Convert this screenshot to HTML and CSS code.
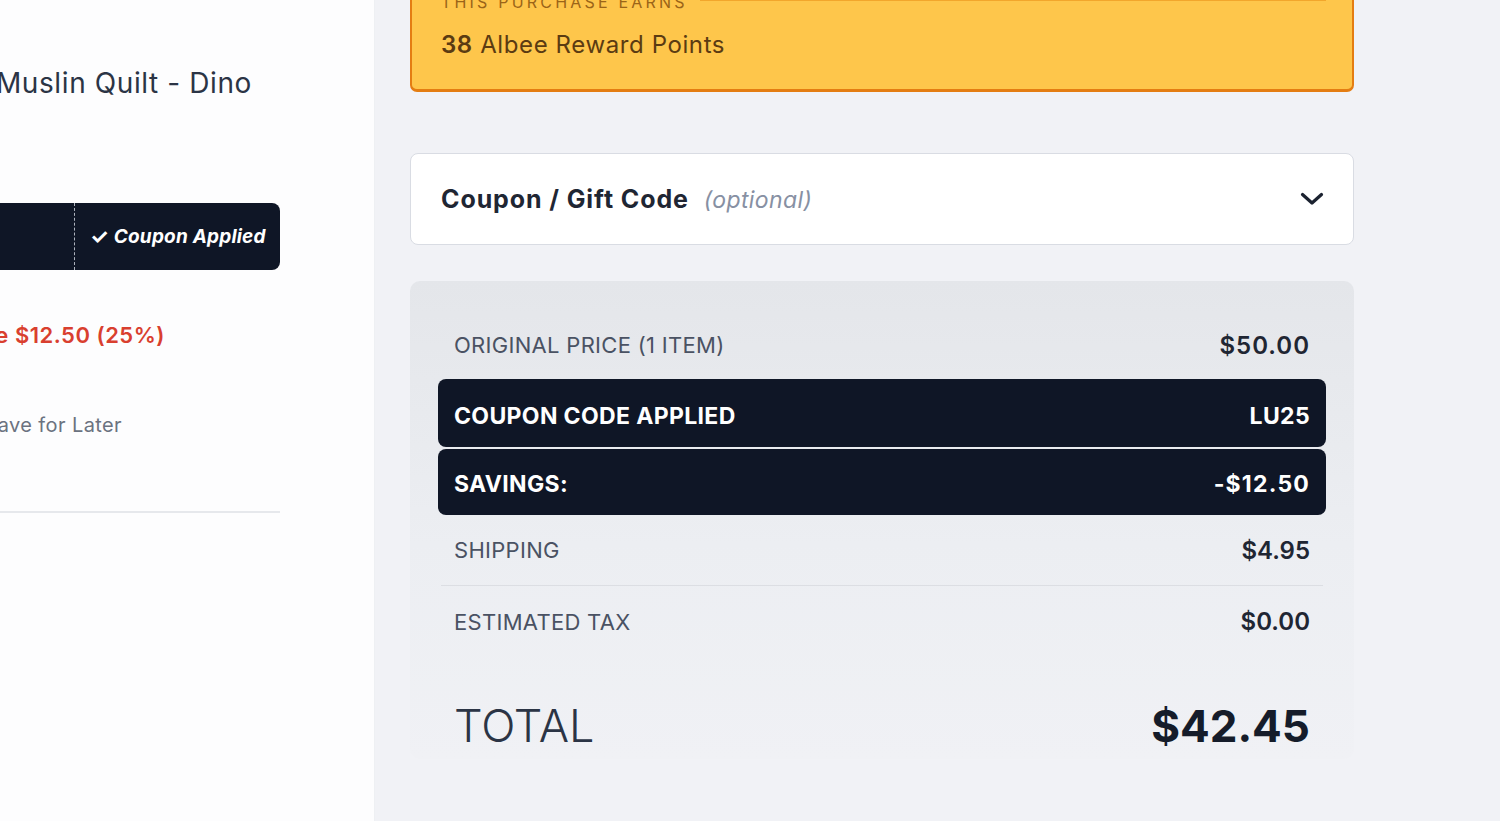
FILE: index.html
```html
<!DOCTYPE html>
<html>
<head>
<meta charset="utf-8">
<link rel="stylesheet" href="styles.css">
</head>
<body>
<div class="page">
  <aside class="cart">
    <div class="clip title-line"><span class="title">Organic Muslin Quilt - Dino</span></div>
    <div class="code-bar">
      <div class="code-input"></div>
      <div class="code-status"><span class="tick">✓</span> Coupon Applied</div>
    </div>
    <div class="clip save-line"><span class="save">You Save $12.50 (25%)</span></div>
    <div class="clip later-line"><span class="later">Remove &nbsp; Save for Later</span></div>
    <div class="divider"></div>
  </aside>
  <main class="summary-col">
    <section class="reward">
      <div class="reward-label"><span>THIS PURCHASE EARNS</span><span class="reward-rule"></span></div>
      <div class="reward-points"><b>38</b> Albee Reward Points</div>
    </section>
    <section class="coupon">
      <div class="coupon-title">Coupon / Gift Code <span class="optional">(optional)</span></div>
      <svg class="chevron" width="24" height="14" viewBox="0 0 24 14"><path d="M2.5 2.5 L12 11 L21.5 2.5" fill="none" stroke="#1b2230" stroke-width="3.2" stroke-linecap="round" stroke-linejoin="round"/></svg>
    </section>
    <section class="summary">
      <div class="row plain first"><span class="lbl">ORIGINAL PRICE (1 ITEM)</span><span class="val">$50.00</span></div>
      <div class="row dark"><span>COUPON CODE APPLIED</span><span>LU25</span></div>
      <div class="row dark"><span>SAVINGS:</span><span class="wide">-$12.50</span></div>
      <div class="row plain ship"><span class="lbl">SHIPPING</span><span class="val">$4.95</span></div>
      <div class="row plain tax"><span class="lbl">ESTIMATED TAX</span><span class="val">$0.00</span></div>
      <div class="row total"><span class="tlbl">TOTAL</span><span class="tval">$42.45</span></div>
    </section>
  </main>
</div>
</body>
</html>
```

FILE: styles.css
```css
* { box-sizing: border-box; }
html, body { margin: 0; padding: 0; }
body {
  background: #f1f2f6;
  font-family: Inter, "Open Sans", sans-serif;
  color: #1f2937;
  overflow: hidden;
}
.page {
  display: flex;
  height: 821px;
  overflow: hidden;
}
.cart {
  width: 375px;
  flex: none;
  background: #fdfdfe;
  border-right: 1px solid #eef0f3;
  display: flex;
  flex-direction: column;
}
.clip {
  width: 280px;
  display: flex;
  justify-content: flex-end;
  overflow: hidden;
  white-space: nowrap;
}
.title-line { margin-top: 64px; height: 38px; align-items: center; padding-right: 28px; }
.title { font-size: 28px; color: #2b3445; font-weight: 400; letter-spacing: 0.6px; }
.code-bar {
  margin-top: 101px;
  width: 280px;
  height: 67px;
  background: #0f1626;
  border-radius: 0 8px 8px 0;
  display: flex;
}
.code-input {
  width: 75px;
  border-right: 1.5px dashed #aeb3bd;
}
.code-status {
  flex: 1;
  color: #ffffff;
  font-style: italic;
  font-weight: 700;
  font-size: 19px;
  display: flex;
  align-items: center;
  gap: 5px;
  padding-left: 15px;
  letter-spacing: 0.2px;
}
.tick { font-size: 21px; font-style: normal; }
.save-line { margin-top: 50px; height: 30px; align-items: center; padding-right: 115px; }
.save { color: #d93f2f; font-size: 22px; font-weight: 600; letter-spacing: 0.5px; }
.later-line { margin-top: 60px; height: 30px; align-items: center; padding-right: 158px; }
.later { color: #6b7280; font-size: 20px; letter-spacing: 0.4px; }
.divider { margin-top: 71px; width: 280px; height: 2px; background: #e6e8ec; }

.summary-col {
  flex: none;
  width: 944px;
  margin-left: 35px;
  display: flex;
  flex-direction: column;
}
.reward {
  margin-top: -38px;
  height: 130px;
  background: #fec64b;
  border: 2px solid #e47d12;
  border-bottom-width: 3px;
  border-radius: 7px;
  padding: 28px 26px 0 29px;
}
.reward-label {
  display: flex;
  align-items: center;
  gap: 12px;
  font-size: 16px;
  letter-spacing: 3.2px;
  color: #9b6418;
  height: 20px;
}
.reward-rule { flex: 1; height: 2px; background: #f2a62c; margin-top: -4px; }
.reward-points {
  margin-top: 18px;
  font-size: 24px;
  color: #5b3b12;
  letter-spacing: 0.6px;
}
.reward-points b { font-weight: 600; }
.coupon {
  margin-top: 61px;
  height: 92px;
  background: #ffffff;
  border: 1px solid #d9dce3;
  border-radius: 8px;
  display: flex;
  align-items: center;
  justify-content: space-between;
  padding: 0 29px 0 30px;
}
.coupon-title { font-size: 25px; font-weight: 700; color: #1f2633; letter-spacing: 0.9px; }
.optional { font-weight: 400; font-style: italic; color: #8790a3; font-size: 23px; margin-left: 8px; letter-spacing: 0.4px; }
.summary {
  margin-top: 36px;
  border-radius: 10px;
  background: linear-gradient(#e4e6ea 0%, #eceef2 55%, #f0f1f5 100%);
  padding: 30px 28px 0 28px;
  height: 478px;
  display: flex;
  flex-direction: column;
}
.row {
  display: flex;
  justify-content: space-between;
  align-items: center;
  padding: 0 16px;
}
.plain .lbl { font-size: 22px; color: #4a5263; letter-spacing: 0.3px; }
.plain .val { font-size: 24px; font-weight: 600; color: #1f2633; }
.first .val { letter-spacing: 1px; }
.first { height: 68px; }
.dark {
  height: 68px;
  background: #0f1626;
  border-radius: 8px;
  color: #ffffff;
  font-weight: 700;
  font-size: 23px;
  letter-spacing: 0.35px;
  margin-bottom: 2px;
  padding-top: 5px;
}
.dark + .dark { margin-bottom: 0; height: 66px; padding-top: 4px; }
.dark .wide { letter-spacing: 1.2px; }
.ship { height: 71px; border-bottom: 1.5px solid #dcdee3; margin: 0 3px; padding: 0 13px; }
.tax { height: 71px; }
.total { padding-top: 37px; align-items: center; height: 100px; }
.tlbl { font-size: 45px; font-weight: 300; color: #2b3445; }
.tval { font-size: 44px; font-weight: 700; color: #151c2a; }
```
